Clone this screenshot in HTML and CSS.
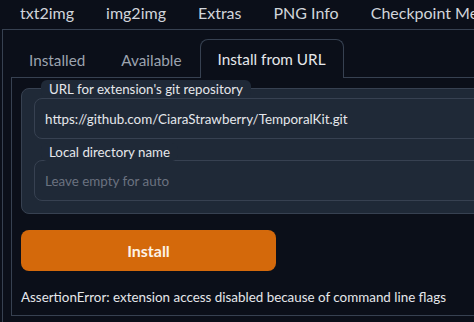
FILE: index.html
```html
<!DOCTYPE html>
<html>
<head>
<meta charset="utf-8">
<link rel="stylesheet" href="styles.css">
</head>
<body>
<div class="page">
  <nav class="topnav">
    <span class="toptab">txt2img</span>
    <span class="toptab">img2img</span>
    <span class="toptab">Extras</span>
    <span class="toptab">PNG Info</span>
    <span class="toptab">Checkpoint Merger</span>
  </nav>
  <div class="outer">
    <div class="subnav">
      <span class="subtab">Installed</span>
      <span class="subtab">Available</span>
      <span class="subtab selected">Install from URL</span>
    </div>
    <div class="panel">
      <div class="block">
        <span class="label">URL for extension's git repository</span>
        <div class="textbox">https://github.com/CiaraStrawberry/TemporalKit.git</div>
        <span class="label second">Local directory name</span>
        <div class="textbox placeholder">Leave empty for auto</div>
      </div>
      <button class="install">Install</button>
      <p class="error">AssertionError: extension access disabled because of command line flags</p>
    </div>
  </div>
</div>
</body>
</html>
```
FILE: styles.css
```css
html, body {
  margin: 0;
  padding: 0;
  background: #0b0f19;
  overflow: hidden;
}
body {
  width: 474px;
  height: 322px;
  font-family: "Lato", "Noto Sans", sans-serif;
  color: #e5e7eb;
}
.page {
  width: 560px;
}
.topnav {
  display: flex;
  height: 29px;
  align-items: center;
  padding-left: 2px;
  white-space: nowrap;
}
.toptab {
  padding: 0 16px;
  font-size: 16px;
  color: #d1d5db;
  line-height: 20px;
  margin-top: -4px;
}
.toptab:first-child {
  padding-left: 18px;
}
.outer {
  margin-left: 2px;
  border: 1px solid #374151;
  padding: 9px 8px 8px 8px;
  height: 320px;
}
.subnav {
  display: flex;
  height: 38px;
  position: relative;
  z-index: 1;
}
.subtab {
  display: flex;
  align-items: center;
  padding: 0 17px;
  border: 1px solid transparent;
  border-bottom: none;
  font-size: 15.3px;
  color: #9ca3af;
  white-space: nowrap;
  height: 38px;
  box-sizing: border-box;
  margin-top: 1px;
}
.subtab.selected {
  border-color: #374151;
  border-radius: 8px 8px 0 0;
  background: #0b0f19;
  color: #e5e7eb;
  height: 39px;
  margin-top: 0;
}
.panel {
  border: 1px solid #374151;
  padding: 10px 0 8px 9px;
}
.block {
  border: 1px solid #374151;
  border-radius: 8px;
  background: #1f2937;
  padding: 0 12px 12px 12px;
  display: flex;
  flex-direction: column;
  align-items: flex-start;
}
.label {
  margin-top: -9px;
  margin-left: 7px;
  height: 18px;
  line-height: 18px;
  padding: 0 8px;
  background: #1f2937;
  border-radius: 6px;
  font-size: 13.3px;
  color: #e5e7eb;
  position: relative;
}
.label.second {
  margin-top: 4px;
}
.textbox {
  align-self: stretch;
  height: 39px;
  border: 1px solid #374151;
  border-radius: 8px;
  background: #1f2937;
  padding: 0 10px;
  display: flex;
  align-items: center;
  font-size: 13.4px;
  color: #e5e7eb;
}
.textbox.placeholder {
  color: #6b7280;
  margin-top: -1px;
}
.install {
  display: block;
  margin-top: 16px;
  width: 255px;
  height: 41px;
  border: none;
  border-radius: 8px;
  background: #d4690b;
  color: #fdf3e7;
  font-family: "Lato", "Noto Sans", sans-serif;
  font-weight: 700;
  font-size: 16px;
}
.error {
  margin: 16px 0 0 0;
  font-size: 13.4px;
  line-height: 20px;
  color: #e5e7eb;
}
```
